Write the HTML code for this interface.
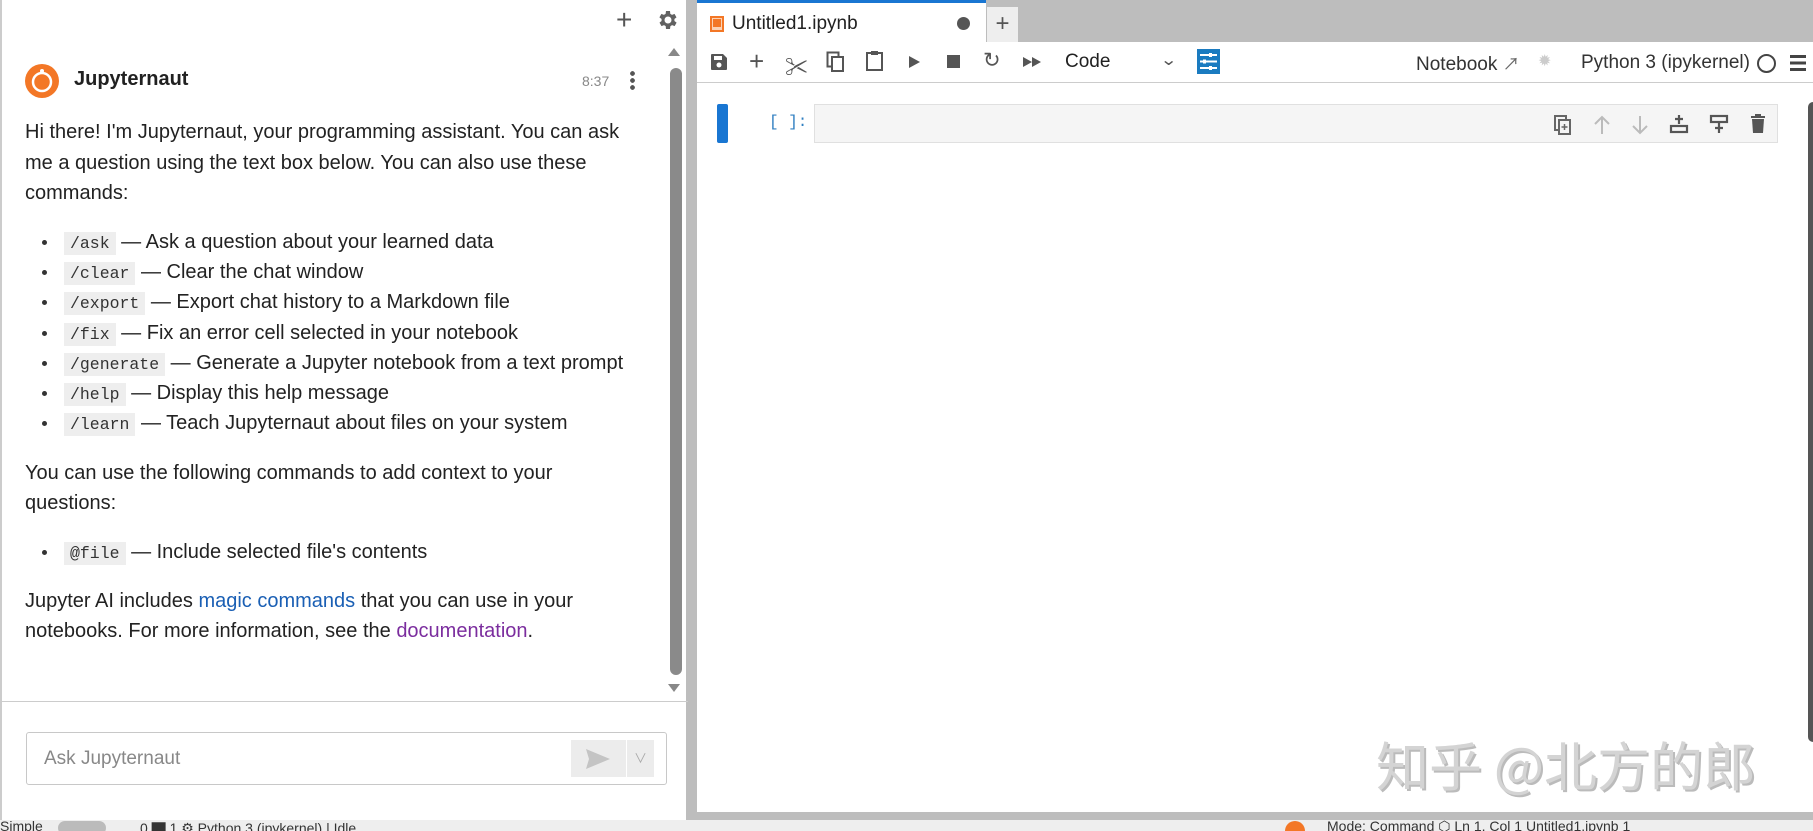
<!DOCTYPE html>
<html><head><meta charset="utf-8"><style>
*{margin:0;padding:0;box-sizing:border-box}
html,body{width:1813px;height:831px;overflow:hidden}
body{background:#bdbdbd;font-family:"Liberation Sans","Noto Sans CJK SC",sans-serif;color:#212121;position:relative}
.a{position:absolute;white-space:nowrap}
#left{position:absolute;left:0;top:0;width:686px;height:820px;background:#fff;border-left:2px solid #ccc}
.t{position:absolute;left:23px;font-size:20px;line-height:30px;white-space:nowrap;color:#222}
.li{left:62px}
.li:before{content:"";position:absolute;left:-22px;top:13px;width:5px;height:5px;border-radius:50%;background:#333}
code{font-family:"Liberation Mono",monospace;font-size:16.5px;background:#eee;padding:2px 6px;color:#333}
#main{position:absolute;left:697px;top:42px;width:1116px;height:770px;background:#fff}
#status{position:absolute;left:0;top:820px;width:1813px;height:11px;background:#eee;overflow:hidden}
.ic{position:absolute}
</style></head><body>
<div id="left">
 <div class="a" style="left:614px;top:4px;font-size:28px;color:#555;font-weight:300">+</div>
 <svg class="ic" style="left:653px;top:8px" width="24" height="24" viewBox="0 0 24 24"><path fill="#616161" d="M19.4 13a7.5 7.5 0 0 0 0-2l2.1-1.6-2-3.5-2.5 1a7 7 0 0 0-1.7-1L15 3h-4l-.4 2.9a7 7 0 0 0-1.7 1l-2.5-1-2 3.5L6.6 11a7.5 7.5 0 0 0 0 2l-2.1 1.6 2 3.5 2.5-1a7 7 0 0 0 1.7 1L11 21h4l.4-2.9a7 7 0 0 0 1.7-1l2.5 1 2-3.5zM13 15.5a3.5 3.5 0 1 1 0-7 3.5 3.5 0 0 1 0 7z"/></svg>
 <svg class="ic" style="left:22px;top:63px" width="36" height="36" viewBox="0 0 36 36"><circle cx="18" cy="18" r="17" fill="#f37726"/><circle cx="18" cy="19" r="9" fill="none" stroke="#fff" stroke-width="2.5"/><circle cx="18" cy="8" r="2" fill="#fff"/></svg>
 <div class="a" style="left:72px;top:68px;font-size:20px;font-weight:bold">Jupyternaut</div>
 <div class="a" style="left:580px;top:73px;font-size:14px;color:#888">8:37</div>
 <div class="a" style="left:628px;top:70px;width:5px;height:20px;background:radial-gradient(circle,#555 2.2px,transparent 2.5px) 0 0/5px 7px"></div>
 <div class="t" style="top:117px">Hi there! I'm Jupyternaut, your programming assistant. You can ask</div>
 <div class="t" style="top:148px">me a question using the text box below. You can also use these</div>
 <div class="t" style="top:178px">commands:</div>
 <div class="t li" style="top:227px"><code>/ask</code> — Ask a question about your learned data</div>
 <div class="t li" style="top:257px"><code>/clear</code> — Clear the chat window</div>
 <div class="t li" style="top:287px"><code>/export</code> — Export chat history to a Markdown file</div>
 <div class="t li" style="top:318px"><code>/fix</code> — Fix an error cell selected in your notebook</div>
 <div class="t li" style="top:348px"><code>/generate</code> — Generate a Jupyter notebook from a text prompt</div>
 <div class="t li" style="top:378px"><code>/help</code> — Display this help message</div>
 <div class="t li" style="top:408px"><code>/learn</code> — Teach Jupyternaut about files on your system</div>
 <div class="t" style="top:458px">You can use the following commands to add context to your</div>
 <div class="t" style="top:488px">questions:</div>
 <div class="t li" style="top:537px"><code>@file</code> — Include selected file's contents</div>
 <div class="t" style="top:586px">Jupyter AI includes <span style="color:#1a5fb4">magic commands</span> that you can use in your</div>
 <div class="t" style="top:616px">notebooks. For more information, see the <span style="color:#7b2d9e">documentation</span>.</div>
 <div class="a" style="left:666px;top:48px;border:6px solid transparent;border-bottom:8px solid #888;border-top:0"></div>
 <div class="a" style="left:668px;top:68px;width:12px;height:607px;background:#8a8a8a;border-radius:6px"></div>
 <div class="a" style="left:666px;top:684px;border:6px solid transparent;border-top:8px solid #888;border-bottom:0"></div>
 <div class="a" style="left:0;top:701px;width:686px;height:1px;background:#ccc"></div>
 <div class="a" style="left:24px;top:732px;width:641px;height:53px;border:1px solid #c8c8c8;border-radius:3px"></div>
 <div class="a" style="left:42px;top:748px;font-size:19px;color:#888">Ask Jupyternaut</div>
 <div class="a" style="left:569px;top:740px;width:55px;height:37px;background:#ececec"></div>
 <svg class="ic" style="left:583px;top:748px" width="26" height="22" viewBox="0 0 26 22"><path d="M1 1l24 10L1 21l3-10z" fill="#c4c4c4"/></svg>
 <div class="a" style="left:625px;top:740px;width:27px;height:37px;background:#ececec;color:#aaa;font-size:13px;text-align:center;line-height:37px">∨</div>
</div>
<!-- tab bar -->
<div class="a" style="left:697px;top:0;width:289px;height:42px;background:#fff;border-top:3px solid #1976d2"></div>
<div class="a" style="left:710px;top:16px;width:14px;height:16px;border:2px solid #f37726;background:#fbd3b6"></div>
<div class="a" style="left:713px;top:19px;width:8px;height:8px;background:#f37726"></div>
<div class="a" style="left:732px;top:13px;font-size:19px">Untitled1.ipynb</div>
<div class="a" style="left:957px;top:17px;width:13px;height:13px;border-radius:50%;background:#555"></div>
<div class="a" style="left:987px;top:7px;width:31px;height:35px;background:#eee;text-align:center;font-size:24px;line-height:33px;color:#555">+</div>
<div id="main">
 <div class="a" style="left:0;top:40px;width:1116px;height:1px;background:#ccc"></div>
 <svg class="ic" style="left:12px;top:10px" width="20" height="20" viewBox="0 0 20 20"><path d="M2 3a1 1 0 0 1 1-1h11l4 4v11a1 1 0 0 1-1 1H3a1 1 0 0 1-1-1z" fill="#555"/><rect x="5" y="4" width="8" height="4" fill="#fff"/><circle cx="10" cy="13" r="2.5" fill="#fff"/></svg>
 <div class="a" style="left:52px;top:4px;font-size:26px;color:#555">+</div>
 <div class="a" style="left:88px;top:6px;font-size:23px;color:#555">✂</div>
 <svg class="ic" style="left:129px;top:9px" width="20" height="22" viewBox="0 0 20 22"><rect x="1.5" y="1.5" width="11" height="14" fill="none" stroke="#555" stroke-width="2"/><rect x="6" y="6" width="11" height="14" fill="#fff" stroke="#555" stroke-width="2"/></svg>
 <svg class="ic" style="left:168px;top:8px" width="20" height="22" viewBox="0 0 20 22"><rect x="2" y="3" width="15" height="17" fill="none" stroke="#555" stroke-width="2"/><rect x="6" y="1" width="7" height="4" fill="#555"/></svg>
 <svg class="ic" style="left:210px;top:12px" width="14" height="16"><path d="M2 2l11 6-11 6z" fill="#555"/></svg>
 <div class="a" style="left:250px;top:13px;width:13px;height:13px;background:#555"></div>
 <div class="a" style="left:286px;top:6px;font-size:21px;color:#555">↻</div>
 <svg class="ic" style="left:325px;top:14px" width="20" height="12"><path d="M1 1l9 5-9 5zM10 1l9 5-9 5z" fill="#555"/></svg>
 <div class="a" style="left:368px;top:9px;font-size:19px">Code</div>
 <div class="a" style="left:465px;top:8px;font-size:16px;color:#555;transform:scaleX(1.3)">⌄</div>
 <svg class="ic" style="left:500px;top:7px" width="23" height="25" viewBox="0 0 23 25"><rect width="23" height="25" fill="#1a7bc0"/><path d="M3 6h17M3 12.5h17M3 19h17" stroke="#fff" stroke-width="2"/><rect x="12" y="4" width="3" height="4" fill="#fff"/><rect x="6" y="10.5" width="3" height="4" fill="#fff"/><rect x="12" y="17" width="3" height="4" fill="#fff"/></svg>
 <div class="a" style="left:719px;top:8px;font-size:19px;color:#333">Notebook <span style="font-size:17px;color:#666">↗</span></div>
 <div class="a" style="left:841px;top:9px;font-size:16px;color:#ccc">✹</div>
 <div class="a" style="left:884px;top:10px;font-size:19px;color:#333">Python 3 (ipykernel)</div>
 <div class="a" style="left:1060px;top:12px;width:19px;height:19px;border-radius:50%;border:2px solid #444"></div>
 <div class="a" style="left:1093px;top:13px;width:16px;height:16px;background:repeating-linear-gradient(#444 0 3px,transparent 3px 6.5px)"></div>
 <div class="a" style="left:20px;top:62px;width:11px;height:39px;border-radius:2px;background:#1976d2"></div>
 <div class="a" style="left:72px;top:71px;font-family:'Liberation Mono',monospace;font-size:16px;color:#307fc1">[ ]:</div>
 <div class="a" style="left:117px;top:62px;width:964px;height:39px;background:#f5f5f5;border:1px solid #e0e0e0"></div>
 <svg class="ic" style="left:857px;top:73px" width="18" height="20"><rect x="1" y="1" width="11" height="14" fill="none" stroke="#666" stroke-width="2"/><rect x="5" y="5" width="11" height="14" fill="#f5f5f5" stroke="#666" stroke-width="2"/><path d="M10.5 9v6M7.5 12h6" stroke="#666" stroke-width="1.5"/></svg>
 <svg class="ic" style="left:896px;top:73px" width="18" height="20"><path d="M9 19V2M2 9l7-7 7 7" fill="none" stroke="#bbb" stroke-width="2"/></svg>
 <svg class="ic" style="left:934px;top:73px" width="18" height="20"><path d="M9 1v17M2 11l7 7 7-7" fill="none" stroke="#bbb" stroke-width="2"/></svg>
 <svg class="ic" style="left:972px;top:72px" width="20" height="20"><path d="M10 1v9M6 5h8" stroke="#555" stroke-width="2.2"/><rect x="2" y="12" width="16" height="6" fill="none" stroke="#555" stroke-width="2.2"/></svg>
 <svg class="ic" style="left:1012px;top:72px" width="20" height="20"><rect x="2" y="2" width="16" height="6" fill="none" stroke="#555" stroke-width="2.2"/><path d="M10 9v10M6 14h8" stroke="#555" stroke-width="2.2"/></svg>
 <svg class="ic" style="left:1053px;top:72px" width="16" height="20"><rect x="1" y="2" width="14" height="2" fill="#555"/><rect x="5" y="0" width="6" height="3" fill="#555"/><path d="M2 5h12l-1 14H3z" fill="#555"/></svg>
 <div class="a" style="left:679px;top:684px;font-size:53px;color:#d4d4d4;font-family:'Noto Sans CJK SC',sans-serif;text-shadow:2px 2px 0 #bbb">知乎 @北方的郎</div>
 <div class="a" style="left:1111px;top:60px;width:5px;height:640px;background:#555;border-radius:5px 0 0 5px"></div>
</div>
<div id="status">
 <div class="a" style="left:0;top:-2px;font-size:14px;color:#333">Simple</div>
 <div class="a" style="left:58px;top:1px;width:48px;height:14px;border-radius:7px;background:#bbb"></div>
 <div class="a" style="left:140px;top:-2px;font-size:14px;color:#333">0 ▇ 1 ⚙ Python 3 (ipykernel) | Idle</div>
 <div class="a" style="left:1285px;top:1px;width:20px;height:20px;border-radius:50%;background:#f37726"></div>
 <div class="a" style="left:1327px;top:-2px;font-size:14px;color:#333">Mode: Command ⬡ Ln 1, Col 1 Untitled1.ipynb 1</div>
</div>
</body></html>
